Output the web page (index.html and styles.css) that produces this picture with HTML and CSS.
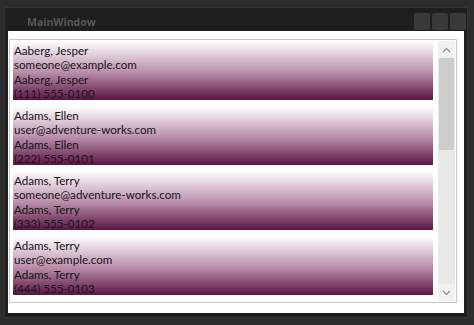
FILE: index.html
```html
<!DOCTYPE html>
<html lang="en">
<head>
    <meta charset="UTF-8">
    <title>MainWindow</title>
    <link rel="stylesheet" href="styles.css">
</head>
<body>
    <div class="window">
        <div class="titlebar">
            <span class="title">MainWindow</span>
            <div class="caption-buttons">
                <span class="cap-btn"></span>
                <span class="cap-btn"></span>
                <span class="cap-btn"></span>
            </div>
        </div>
        <div class="client">
            <div class="listbox">
                <div class="items">
                    <div class="item">
                        <div>Aaberg, Jesper</div>
                        <div>someone@example.com</div>
                        <div>Aaberg, Jesper</div>
                        <div>(111) 555-0100</div>
                    </div>
                    <div class="item">
                        <div>Adams, Ellen</div>
                        <div>user@adventure-works.com</div>
                        <div>Adams, Ellen</div>
                        <div>(222) 555-0101</div>
                    </div>
                    <div class="item">
                        <div>Adams, Terry</div>
                        <div>someone@adventure-works.com</div>
                        <div>Adams, Terry</div>
                        <div>(333) 555-0102</div>
                    </div>
                    <div class="item">
                        <div>Adams, Terry</div>
                        <div>user@example.com</div>
                        <div>Adams, Terry</div>
                        <div>(444) 555-0103</div>
                    </div>
                </div>
                <div class="scrollbar">
                    <div class="arrow">
                        <svg width="9" height="6" viewBox="0 0 9 6"><path d="M1 5 L4.5 1.5 L8 5" fill="none" stroke="#8a8a8a" stroke-width="1.2"/></svg>
                    </div>
                    <div class="track">
                        <div class="thumb"></div>
                    </div>
                    <div class="arrow">
                        <svg width="9" height="6" viewBox="0 0 9 6"><path d="M1 1 L4.5 4.5 L8 1" fill="none" stroke="#8a8a8a" stroke-width="1.2"/></svg>
                    </div>
                </div>
            </div>
        </div>
    </div>
</body>
</html>
```

FILE: styles.css
```css
* {
    margin: 0;
    padding: 0;
    box-sizing: border-box;
}

body {
    width: 474px;
    height: 325px;
    background: #2c2c2c;
    overflow: hidden;
    font-family: "Open Sans", "Noto Sans", sans-serif;
}

.window {
    margin: 7px 6px 0 4px;
    height: 311px;
    background: #1e1e1e;
    border: 1px solid #333;
    padding: 0 3px 4px 3px;
    display: flex;
    flex-direction: column;
}

.titlebar {
    height: 25px;
    display: flex;
    align-items: center;
    justify-content: space-between;
    padding-left: 19px;
}

.title {
    color: #585858;
    font-family: "Open Sans", sans-serif;
    font-weight: bold;
    font-size: 10.5px;
    margin-top: 4px;
}

.caption-buttons {
    display: flex;
    gap: 2px;
    align-self: flex-end;
    margin-bottom: 1px;
    margin-right: -2px;
}

.cap-btn {
    width: 16px;
    height: 17px;
    background: #3a3a3a;
    border-radius: 2px;
}

.client {
    flex: 1;
    background: #fff;
    padding: 8px 7px 10px 1px;
}

.listbox {
    height: 100%;
    border: 1px solid #c8c8c8;
    display: flex;
    padding: 1px 1px 1px 3px;
    overflow: hidden;
}

.items {
    flex: 1;
    overflow: hidden;
    padding-right: 5px;
}

.item {
    height: 59px;
    margin-bottom: 6px;
    padding: 3px 0 0 1px;
    font-family: Lato, sans-serif;
    font-size: 11.6px;
    line-height: 14.3px;
    color: #151515;
    background: linear-gradient(to bottom, #ffffff 0%, #b68aa6 55%, #5c1445 100%);
}

.scrollbar {
    width: 17px;
    display: flex;
    flex-direction: column;
    background: #e9e9e9;
}

.arrow {
    height: 17px;
    display: flex;
    align-items: center;
    justify-content: center;
    background: #f0f0f0;
}

.track {
    flex: 1;
}

.thumb {
    height: 92px;
    margin: 0 1px;
    background: #cdcdcd;
}
```
